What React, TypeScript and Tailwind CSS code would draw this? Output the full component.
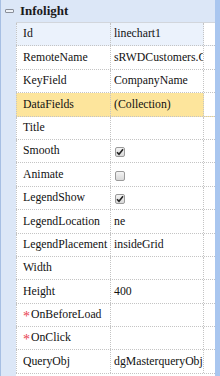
import React from 'react';

type Row = {
    label: string;
    value?: string;
    check?: boolean;
    required?: boolean;
    tone?: 'blue' | 'yellow';
};

const rows: Row[] = [
    { label: 'Id', value: 'linechart1', tone: 'blue' },
    { label: 'RemoteName', value: 'sRWDCustomers.Customers' },
    { label: 'KeyField', value: 'CompanyName' },
    { label: 'DataFields', value: '(Collection)', tone: 'yellow' },
    { label: 'Title' },
    { label: 'Smooth', check: true },
    { label: 'Animate', check: false },
    { label: 'LegendShow', check: true },
    { label: 'LegendLocation', value: 'ne' },
    { label: 'LegendPlacement', value: 'insideGrid' },
    { label: 'Width' },
    { label: 'Height', value: '400' },
    { label: 'OnBeforeLoad', required: true },
    { label: 'OnClick', required: true },
    { label: 'QueryObj', value: 'dgMasterqueryObj' },
];

const CheckBox = ({ checked }: { checked: boolean }) => (
    <span className="w-[10px] h-[10px] rounded-[2px] border border-[#9a9a9a] bg-gradient-to-b from-[#f4f4f4] to-[#d9d9d9] flex items-center justify-center">
        {checked && (
            <svg width="8" height="8" viewBox="0 0 8 8">
                <path d="M1 4.2 L3 6.3 L7 1.3" fill="none" stroke="#222" strokeWidth="1.6" />
            </svg>
        )}
    </span>
);

export default function App() {
    return (
        <div className="w-[220px] h-[376px] flex bg-white overflow-hidden [font-family:'Liberation_Serif',serif] text-[11.75px] text-[#111]">
            <div className="flex-1 flex flex-col border-l border-[#a7bfe3]">
                {/* group header */}
                <div className="h-[22px] shrink-0 bg-[#dce7f7] flex items-center">
                    <span className="ml-[4px] w-[9px] h-[4px] rounded-[1px] border border-[#8a8f99] bg-[#eef2f8]" />
                    <span className="ml-[6px] font-bold text-[13px] text-[#1a1a1a]">Infolight</span>
                </div>
                <div className="flex-1 flex">
                    <div className="w-[15px] shrink-0 bg-[#dce7f7]" />
                    <div className="flex-1 flex flex-col border-t border-[#d2d6dc]">
                        {rows.map((r) => (
                            <div
                                key={r.label}
                                className={`h-[23.4px] shrink-0 flex border-b border-dotted border-[#c4c4c4] ${
                                    r.tone === 'blue' ? 'bg-[#ebf2fc]' : r.tone === 'yellow' ? 'bg-[#fde59c]' : 'bg-white'
                                }`}
                            >
                                <div className="w-[95px] shrink-0 flex items-center pl-[6px] border-l border-r border-dotted border-[#c4c4c4] overflow-hidden whitespace-nowrap">
                                    {r.required && <span className="text-[#e8414f] text-[14px] leading-none self-start mt-[6px] mr-[1px]">*</span>}
                                    {r.label}
                                </div>
                                <div className="w-[93px] shrink-0 flex items-center pl-[3px] border-r border-dotted border-[#c4c4c4] overflow-hidden whitespace-nowrap">
                                    {r.check !== undefined ? (
                                        <span className="ml-[1px] mt-[2px]"><CheckBox checked={r.check} /></span>
                                    ) : (
                                        r.value
                                    )}
                                </div>
                                <div className="flex-1 bg-white" />
                            </div>
                        ))}
                    </div>
                </div>
            </div>
            <div className="w-[5px] shrink-0 bg-[#a9c6ef]" />
        </div>
    );
}
